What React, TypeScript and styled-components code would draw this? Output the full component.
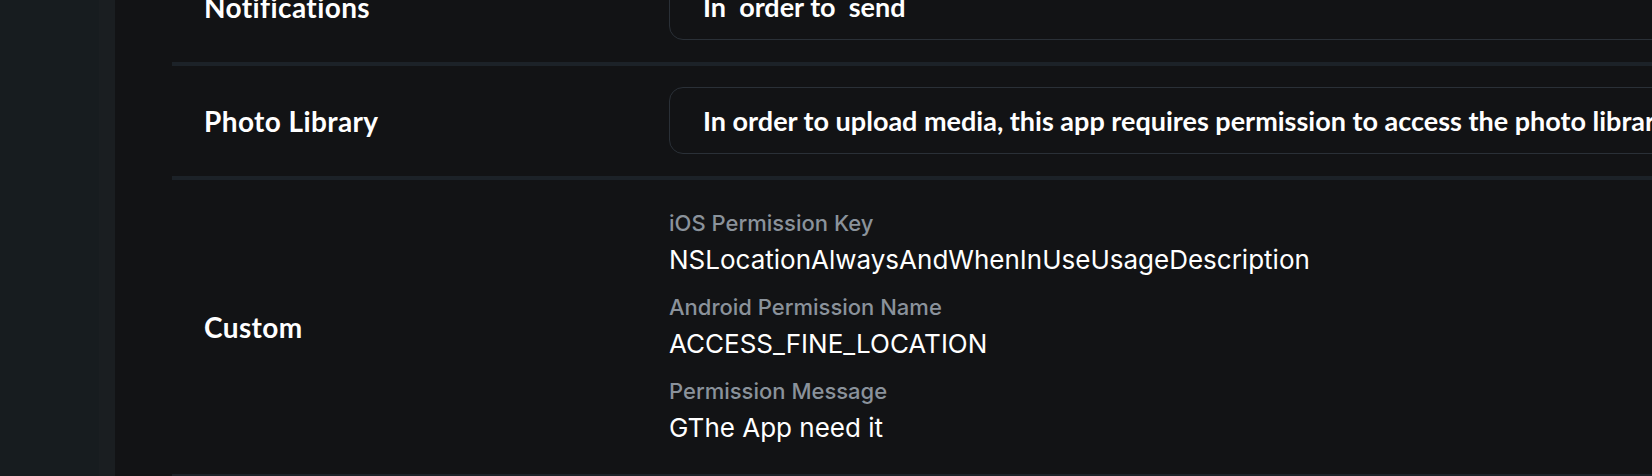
import React from "react";
import styled, { createGlobalStyle } from "styled-components";

const GlobalStyle = createGlobalStyle`
  html, body {
    margin: 0;
    padding: 0;
    background: #121315;
    overflow: hidden;
  }
  #root {
    height: 476px;
    overflow: hidden;
  }
`;

const Shell = styled.div`
  display: flex;
  height: 476px;
  width: 1652px;
  overflow: hidden;
  background: #121315;
`;

const Sidebar = styled.aside`
  flex: 0 0 115px;
  height: 100%;
  background: #171c1f;
  box-shadow: inset -16px 0 0 #1a1e21;
`;

const Main = styled.main`
  flex: 1 1 auto;
  min-width: 0;
  overflow: hidden;
  padding-left: 57px;
`;

const List = styled.div`
  width: 1800px;
  margin-top: -52px;
`;

const Row = styled.section<{ $tall?: boolean }>`
  display: grid;
  grid-template-columns: 497px 1fr;
  align-items: center;
  padding: ${(p) => (p.$tall ? "30px 0 31px" : "21px 0 22px")};
  border-top: 4px solid #1c2228;
`;

const RowLabel = styled.div`
  padding-left: 32px;
  font-family: "Lato", "Liberation Sans", sans-serif;
  font-weight: 700;
  font-size: 28px;
  letter-spacing: 0.4px;
  line-height: 32px;
  color: #ffffff;
`;

const MessageBox = styled.div`
  box-sizing: border-box;
  width: 1200px;
  height: 67px;
  display: flex;
  align-items: center;
  padding-left: 33px;
  border: 1px solid #2a3037;
  border-radius: 14px;
  font-family: "Lato", "Liberation Sans", sans-serif;
  font-weight: 700;
  font-size: 27px;
  color: #ffffff;
  white-space: pre;
  overflow: hidden;
`;

const Fields = styled.div`
  display: flex;
  flex-direction: column;
  gap: 19px;
`;

const Field = styled.div`
  display: flex;
  flex-direction: column;
  gap: 9px;
`;

const FieldLabel = styled.div`
  font-family: "Inter", "Liberation Sans", sans-serif;
  font-weight: 500;
  font-size: 22px;
  line-height: 26px;
  color: #8a929b;
`;

const FieldValue = styled.div`
  font-family: "Inter", "Liberation Sans", sans-serif;
  font-weight: 400;
  font-size: 26px;
  line-height: 30px;
  color: #ffffff;
`;

const simpleRows = [
  { label: "Notifications", message: "In  order to  send" },
  {
    label: "Photo Library",
    message:
      "In order to upload media, this app requires permission to access the photo library.",
  },
];

const customFields = [
  { label: "iOS Permission Key", value: "NSLocationAlwaysAndWhenInUseUsageDescription" },
  { label: "Android Permission Name", value: "ACCESS_FINE_LOCATION" },
  { label: "Permission Message", value: "GThe App need it" },
];

export default function App() {
  return (
    <>
      <GlobalStyle />
      <Shell>
        <Sidebar />
        <Main>
          <List>
            {simpleRows.map((r) => (
              <Row key={r.label}>
                <RowLabel>{r.label}</RowLabel>
                <MessageBox>{r.message}</MessageBox>
              </Row>
            ))}
            <Row $tall>
              <RowLabel>Custom</RowLabel>
              <Fields>
                {customFields.map((f) => (
                  <Field key={f.label}>
                    <FieldLabel>{f.label}</FieldLabel>
                    <FieldValue>{f.value}</FieldValue>
                  </Field>
                ))}
              </Fields>
            </Row>
            <Row />
          </List>
        </Main>
      </Shell>
    </>
  );
}
